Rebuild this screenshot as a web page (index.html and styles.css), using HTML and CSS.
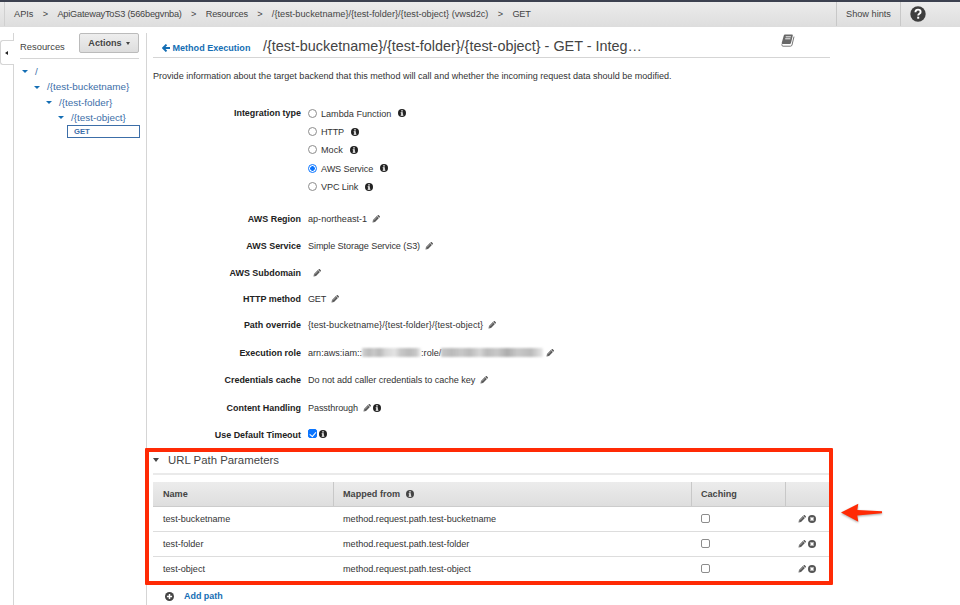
FILE: index.html
```
<!DOCTYPE html>
<html lang="en">
<head>
<meta charset="utf-8">
<title>API Gateway</title>
<link rel="stylesheet" href="styles.css">
</head>
<body>
<svg class="defs" width="0" height="0">
  <symbol id="info" viewBox="0 0 16 16"><circle cx="8" cy="8" r="8" fill="currentColor"/><path d="M6.5 2.5h3v2.4h-3zM5.4 6.4h4.1v5h1.2v1.9H5.4v-1.9h1.2V8.3H5.4z" fill="#fff"/></symbol>
  <symbol id="pencil" viewBox="0 0 16 16"><path d="M1 15l1-5 7.8-7.8 4 4L6 14z" fill="currentColor"/><path d="M10.6 1.4l.9-.9a1.6 1.6 0 0 1 2.2 0l1.8 1.8a1.6 1.6 0 0 1 0 2.2l-.9.9z" fill="currentColor"/><path d="M4 10.6L10.2 4.4M2.4 11.5l2.1 2.1" stroke="#fff" stroke-width=".9" fill="none"/></symbol>
  <symbol id="remove" viewBox="0 0 16 16"><circle cx="8" cy="8" r="8" fill="currentColor"/><path d="M5 5l6 6M11 5l-6 6" stroke="#fff" stroke-width="3"/></symbol>
  <symbol id="plus" viewBox="0 0 16 16"><circle cx="8" cy="8" r="8" fill="currentColor"/><path d="M8 3.4v9.2M3.4 8h9.2" stroke="#fff" stroke-width="2.6"/></symbol>
</svg>

<header class="topbar">
  <nav class="crumbs">
    <span>APIs</span><i>&gt;</i><span class="tight">ApiGatewayToS3 (566begvnba)</span><i>&gt;</i><span class="tight">Resources</span><i>&gt;</i><span>/{test-bucketname}/{test-folder}/{test-object} (vwsd2c)</span><i>&gt;</i><span class="tight">GET</span>
  </nav>
  <div class="hints">Show hints</div>
  <div class="help"><svg width="16" height="16" viewBox="0 0 16 16"><circle cx="8" cy="8" r="7.7" fill="#3e3e3e"/><path d="M5.4 6.2C5.5 4.4 6.500 3.600 8 3.600s2.600.9 2.600 2.300c0 1.900-2.400 1.900-2.400 3.700" fill="none" stroke="#fff" stroke-width="1.900"/><rect x="7.200" y="10.700" width="2" height="2" fill="#fff"/></svg></div>
</header>

<div class="body">
  <div class="rail"><div class="collapse"><b></b></div></div>
  <aside class="side">
    <div class="side-head"><span>Resources</span><button class="actions">Actions<b class="caret"></b></button></div>
    <ul class="tree">
      <li class="l0"><b class="caret"></b>/</li>
      <li class="l1"><b class="caret"></b>/{test-bucketname}</li>
      <li class="l2"><b class="caret"></b>/{test-folder}</li>
      <li class="l3"><b class="caret"></b>/{test-object}</li>
    </ul>
    <div class="method">GET</div>
  </aside>
  <main class="main">
    <div class="title">
      <a class="back"><svg width="9" height="8" viewBox="0 0 9 8"><path d="M4.500.6L1.200 4l3.300 3.400M1.400 4H8" fill="none" stroke="currentColor" stroke-width="1.900"/></svg>Method Execution</a>
      <h1>/{test-bucketname}/{test-folder}/{test-object} - GET - Integ…</h1>
      <svg class="book" width="14" height="13" viewBox="0 0 14 13"><path d="M4 .5h7q1 0 .8 1L10 9q-.3 1-1.300 1H1.500q-1 0-.8-1L2.800 1.400Q3 .5 4 .5z" fill="#686868"/><path d="M4.700 2.800h5.200M4.200 4.800h5.200" stroke="#fff" stroke-width=".9"/><path d="M.8 10.300q-.1 1.900 1.200 1.900h7.500q1.200 0 1.500-1.200L13 2.600" fill="none" stroke="#777" stroke-width="1"/></svg>
    </div>
    <p class="intro">Provide information about the target backend that this method will call and whether the incoming request data should be modified.</p>

    <div class="form">
      <div class="row types"><label>Integration type</label>
        <div class="radios">
          <div><input type="radio" name="t"><span>Lambda Function</span><svg class="info"><use href="#info"/></svg></div>
          <div><input type="radio" name="t"><span class="tight">HTTP</span><svg class="info"><use href="#info"/></svg></div>
          <div><input type="radio" name="t"><span>Mock</span><svg class="info"><use href="#info"/></svg></div>
          <div><input type="radio" name="t" checked><span class="snug">AWS Service</span><svg class="info"><use href="#info"/></svg></div>
          <div><input type="radio" name="t"><span class="snug">VPC Link</span><svg class="info"><use href="#info"/></svg></div>
        </div>
      </div>
      <div class="row"><label>AWS Region</label><span>ap-northeast-1</span><svg class="pencil"><use href="#pencil"/></svg></div>
      <div class="row h28"><label>AWS Service</label><span class="snug">Simple Storage Service (S3)</span><svg class="pencil"><use href="#pencil"/></svg></div>
      <div class="row h26"><label>AWS Subdomain</label><svg class="pencil"><use href="#pencil"/></svg></div>
      <div class="row h25"><label>HTTP method</label><span class="tight">GET</span><svg class="pencil"><use href="#pencil"/></svg></div>
      <div class="row h28"><label>Path override</label><span class="wide">{test-bucketname}/{test-folder}/{test-object}</span><svg class="pencil"><use href="#pencil"/></svg></div>
      <div class="row role"><label>Execution role</label><span>arn:aws:iam::</span><span class="mask m1"></span><span>:role/</span><span class="mask m2"></span><svg class="pencil"><use href="#pencil"/></svg></div>
      <div class="row h28"><label>Credentials cache</label><span class="cred">Do not add caller credentials to cache key</span><svg class="pencil"><use href="#pencil"/></svg></div>
      <div class="row"><label>Content Handling</label><span class="snug">Passthrough</span><svg class="pencil"><use href="#pencil"/></svg><svg class="info"><use href="#info"/></svg></div>
      <div class="row last"><label>Use Default Timeout</label><input type="checkbox" checked><svg class="info"><use href="#info"/></svg></div>
    </div>

    <h2><b class="caret"></b>URL Path Parameters</h2>
    <div class="table">
      <div class="tr th"><div>Name</div><div>Mapped from<svg class="info"><use href="#info"/></svg></div><div>Caching</div><div></div></div>
      <div class="tr"><div>test-bucketname</div><div>method.request.path.test-bucketname</div><div><input type="checkbox"></div><div><svg class="pencil"><use href="#pencil"/></svg><svg class="remove"><use href="#remove"/></svg></div></div>
      <div class="tr"><div>test-folder</div><div>method.request.path.test-folder</div><div><input type="checkbox"></div><div><svg class="pencil"><use href="#pencil"/></svg><svg class="remove"><use href="#remove"/></svg></div></div>
      <div class="tr"><div>test-object</div><div>method.request.path.test-object</div><div><input type="checkbox"></div><div><svg class="pencil"><use href="#pencil"/></svg><svg class="remove"><use href="#remove"/></svg></div></div>
    </div>
    <div class="add"><svg><use href="#plus"/></svg>Add path</div>
  </main>
</div>
<div class="highlight"></div>
<svg class="arrow" width="46" height="26" viewBox="0 0 46 26"><path d="M1 12.500L18.300 3.700l-1 6.300L42 11.200v2L17.300 15.500l1 6.200z" fill="#ff2a05"/></svg>
</body>
</html>
```
FILE: styles.css
```
* { box-sizing: border-box; }
body { margin: 0; width: 960px; height: 605px; overflow: hidden; position: relative; background: #fff; color: #333; font: 9.1px/12px "Liberation Sans", Arial, sans-serif; }
.defs { position: absolute; }
svg { flex: none; display: block; }
input { appearance: none; margin: 0; width: 9px; height: 9px; border: 1px solid #8c8c8c; background: #fff; flex: none; }
input[type=radio] { border-radius: 50%; }
input[type=radio]:checked { border-color: #0a75ff; background: radial-gradient(circle, #0a75ff 0 2px, #fff 2.6px); }
input[type=checkbox] { border-radius: 2px; }
input[type=checkbox]:checked { border-color: #0a75ff; background: #0a75ff; display: grid; place-items: center; }
input[type=checkbox]:checked::before { content: ""; width: 2.500px; height: 5px; border: solid #fff; border-width: 0 1.300px 1.300px 0; transform: rotate(40deg) translate(-.4px, -.3px); }
.caret { display: inline-block; width: 0; height: 0; border: 3px solid transparent; border-top: 3.500px solid currentColor; border-bottom: 0; }
.info { width: 8px; height: 8px; color: #222; }
.pencil { width: 8px; height: 8px; color: #555; }
.tight { letter-spacing: -.2px; }
.snug { letter-spacing: -.1px; }
.wide { letter-spacing: .05px; }
.cred { letter-spacing: -.035px; }

.topbar { display: flex; height: 27px; border-top: 2px solid #3c4150; border-bottom: 1px solid #ddd; background: linear-gradient(#ececec, #dedede); line-height: 24px; color: #444; }
.crumbs { flex: 1; display: flex; margin-left: 4px; border-left: 1px solid #d0d0d0; padding-left: 9px; font-size: 9.2px; }
.crumbs i { font-style: normal; width: 24px; text-align: center; }
.hints { width: 64px; border-left: 1px solid #c8c8c8; padding-left: 9px; font-size: 9.2px; }
.help { width: 60px; border-left: 1px solid #c8c8c8; padding: 4px 0 0 9px; }

.body { display: flex; height: 578px; }
.rail { width: 14px; padding-top: 6px; display: flex; flex-direction: column; }
.rail::before { content: ""; height: 7px; border-right: 1px solid #d5d5d5; }
.rail::after { content: ""; flex: 1; border-right: 1px solid #d5d5d5; }
.collapse { height: 25px; border: 1px solid #d5d5d5; border-right: 0; border-radius: 3px 0 0 3px; display: flex; align-items: center; padding-left: 4px; }
.collapse b { border: 2.500px solid transparent; border-right: 3px solid #222; border-left: 0; }
.side { width: 133px; margin-top: 6px; border-right: 1px solid #d5d5d5; padding: 0 7px 0 6px; }
.side-head { height: 26px; display: flex; justify-content: space-between; border-bottom: 1px solid #d5d5d5; font-size: 9.4px; line-height: 27px; color: #444; }
.actions { width: 60px; height: 20px; border: 1px solid #bbb; border-radius: 2px; background: linear-gradient(#eee, #ddd); color: #444; font: bold 9.1px/18px "Liberation Sans", Arial, sans-serif; padding: 0; display: flex; justify-content: center; align-items: center; gap: 4px; }
.actions .caret { border-width: 3px 2.500px 0; margin-top: 1px; }
.tree { list-style: none; margin: 5px 0 0; padding: 0; font-size: 9.9px; line-height: 15.400px; color: #3c6ea8; }
.tree li { display: flex; align-items: center; gap: 7px; height: 15.400px; padding-left: 2px; }
.tree .caret { color: #146eb4; }
.tree .l1 { padding-left: 14px; }
.tree .l2 { padding-left: 26px; }
.tree .l3 { padding-left: 38px; }
.method { width: 73px; height: 13px; margin-left: 47px; margin-top: -1px; border: 1px solid #3c6ea8; padding-left: 6px; font: bold 7.700px/11px "Liberation Sans", Arial, sans-serif; color: #3c6ea8; }

.main { width: 683px; padding-left: 6px; }
.title { height: 31px; border-bottom: 1px solid #d5d5d5; display: flex; }
.back { display: flex; align-items: center; gap: 1.500px; width: 101px; padding: 11px 0 0 9px; font-weight: bold; color: #146eb4; font-size: 9.050px; white-space: nowrap; height: 31px; }
h1 { margin: 0; padding: 9px 0 0 9px; font-weight: normal; font-size: 14.400px; line-height: 20px; flex: 1; white-space: nowrap; color: #444; }
.book { margin: 7px 35px 0 0; }
.intro { margin: 0; height: 46px; padding-top: 12px; white-space: nowrap; color: #333; font-size: 9.060px; }

.row { display: flex; align-items: center; height: 27px; }
.row label { width: 148px; margin-right: 7px; text-align: right; font-weight: bold; font-size: 8.950px; color: #222; flex: none; }
.row span { white-space: nowrap; }
.row .pencil { margin-left: 5px; }
.row .pencil + .info, .row input + .info { margin-left: 2px; }
.row.last input, .row.last .info { margin-bottom: 2px; }
.row.h28 { height: 28px; }
.row.h26 { height: 26px; }
.row.h25 { height: 25px; }
.row.role .pencil { margin-left: 3px; }
.row.types { height: 101px; align-items: flex-start; }
.types label { line-height: 19px; }
.radios div { display: flex; align-items: center; height: 18.400px; }
.radios span { margin: 1px 7px 0 4px; }
.row .mask { height: 9px; opacity: .8; filter: blur(.8px); }
.m1 { width: 59px; background: linear-gradient(90deg, #c8c8c8, #aaa 12%, #bbb 20%, #a8a8a8 30%, #ccc 40%, #ddd 55%, #bbb 65%, #aaa 80%, #bbb 92%, #eee); }
.m2 { width: 102px; background: linear-gradient(90deg, #bbb, #aaa 10%, #bbb 20%, #aaa 28%, #ccc 38%, #aaa 45%, #bbb 55%, #999 65%, #bbb 75%, #aaa 88%, #e4e4e4); }

h2 { margin: 0; height: 27px; padding-bottom: 2px; border-bottom: 2px solid #eaeaea; display: flex; align-items: center; gap: 9px; font-size: 11.400px; font-weight: normal; color: #444; }
h2 .caret { border-width: 4px 3.500px 0; }
.table { margin-top: 7px; }
.tr { display: grid; grid-template-columns: 180px 358px 94px 45px; height: 24.800px; border-bottom: 1px solid #ddd; }
.tr > div { display: flex; align-items: center; padding-left: 10px; }
.tr:last-child { border-bottom: 0; }
.th { height: 25px; background: linear-gradient(#ececec, #dedede); border-color: #ccc; font-weight: bold; color: #444; }
.th > div + div { border-left: 1px solid #c8c8c8; padding-left: 9px; }
.th .info { margin-left: 6px; color: #444; }
.tr > div:nth-child(4) { padding-left: 13px; gap: 2px; }
.remove { width: 8px; height: 8px; color: #555; }
.add { display: flex; align-items: center; height: 24px; margin-top: 3px; padding-left: 12px; gap: 10px; font-weight: bold; font-size: 8.950px; color: #146eb4; }
.add svg { width: 9px; height: 9px; color: #444; }
.highlight { position: absolute; left: 145px; top: 448px; width: 688px; height: 137px; border: 4px solid #ff2a05; border-radius: 1px; }
.arrow { position: absolute; left: 840px; top: 500px; filter: drop-shadow(0 1px 1px rgba(0,0,0,.35)); }
```
